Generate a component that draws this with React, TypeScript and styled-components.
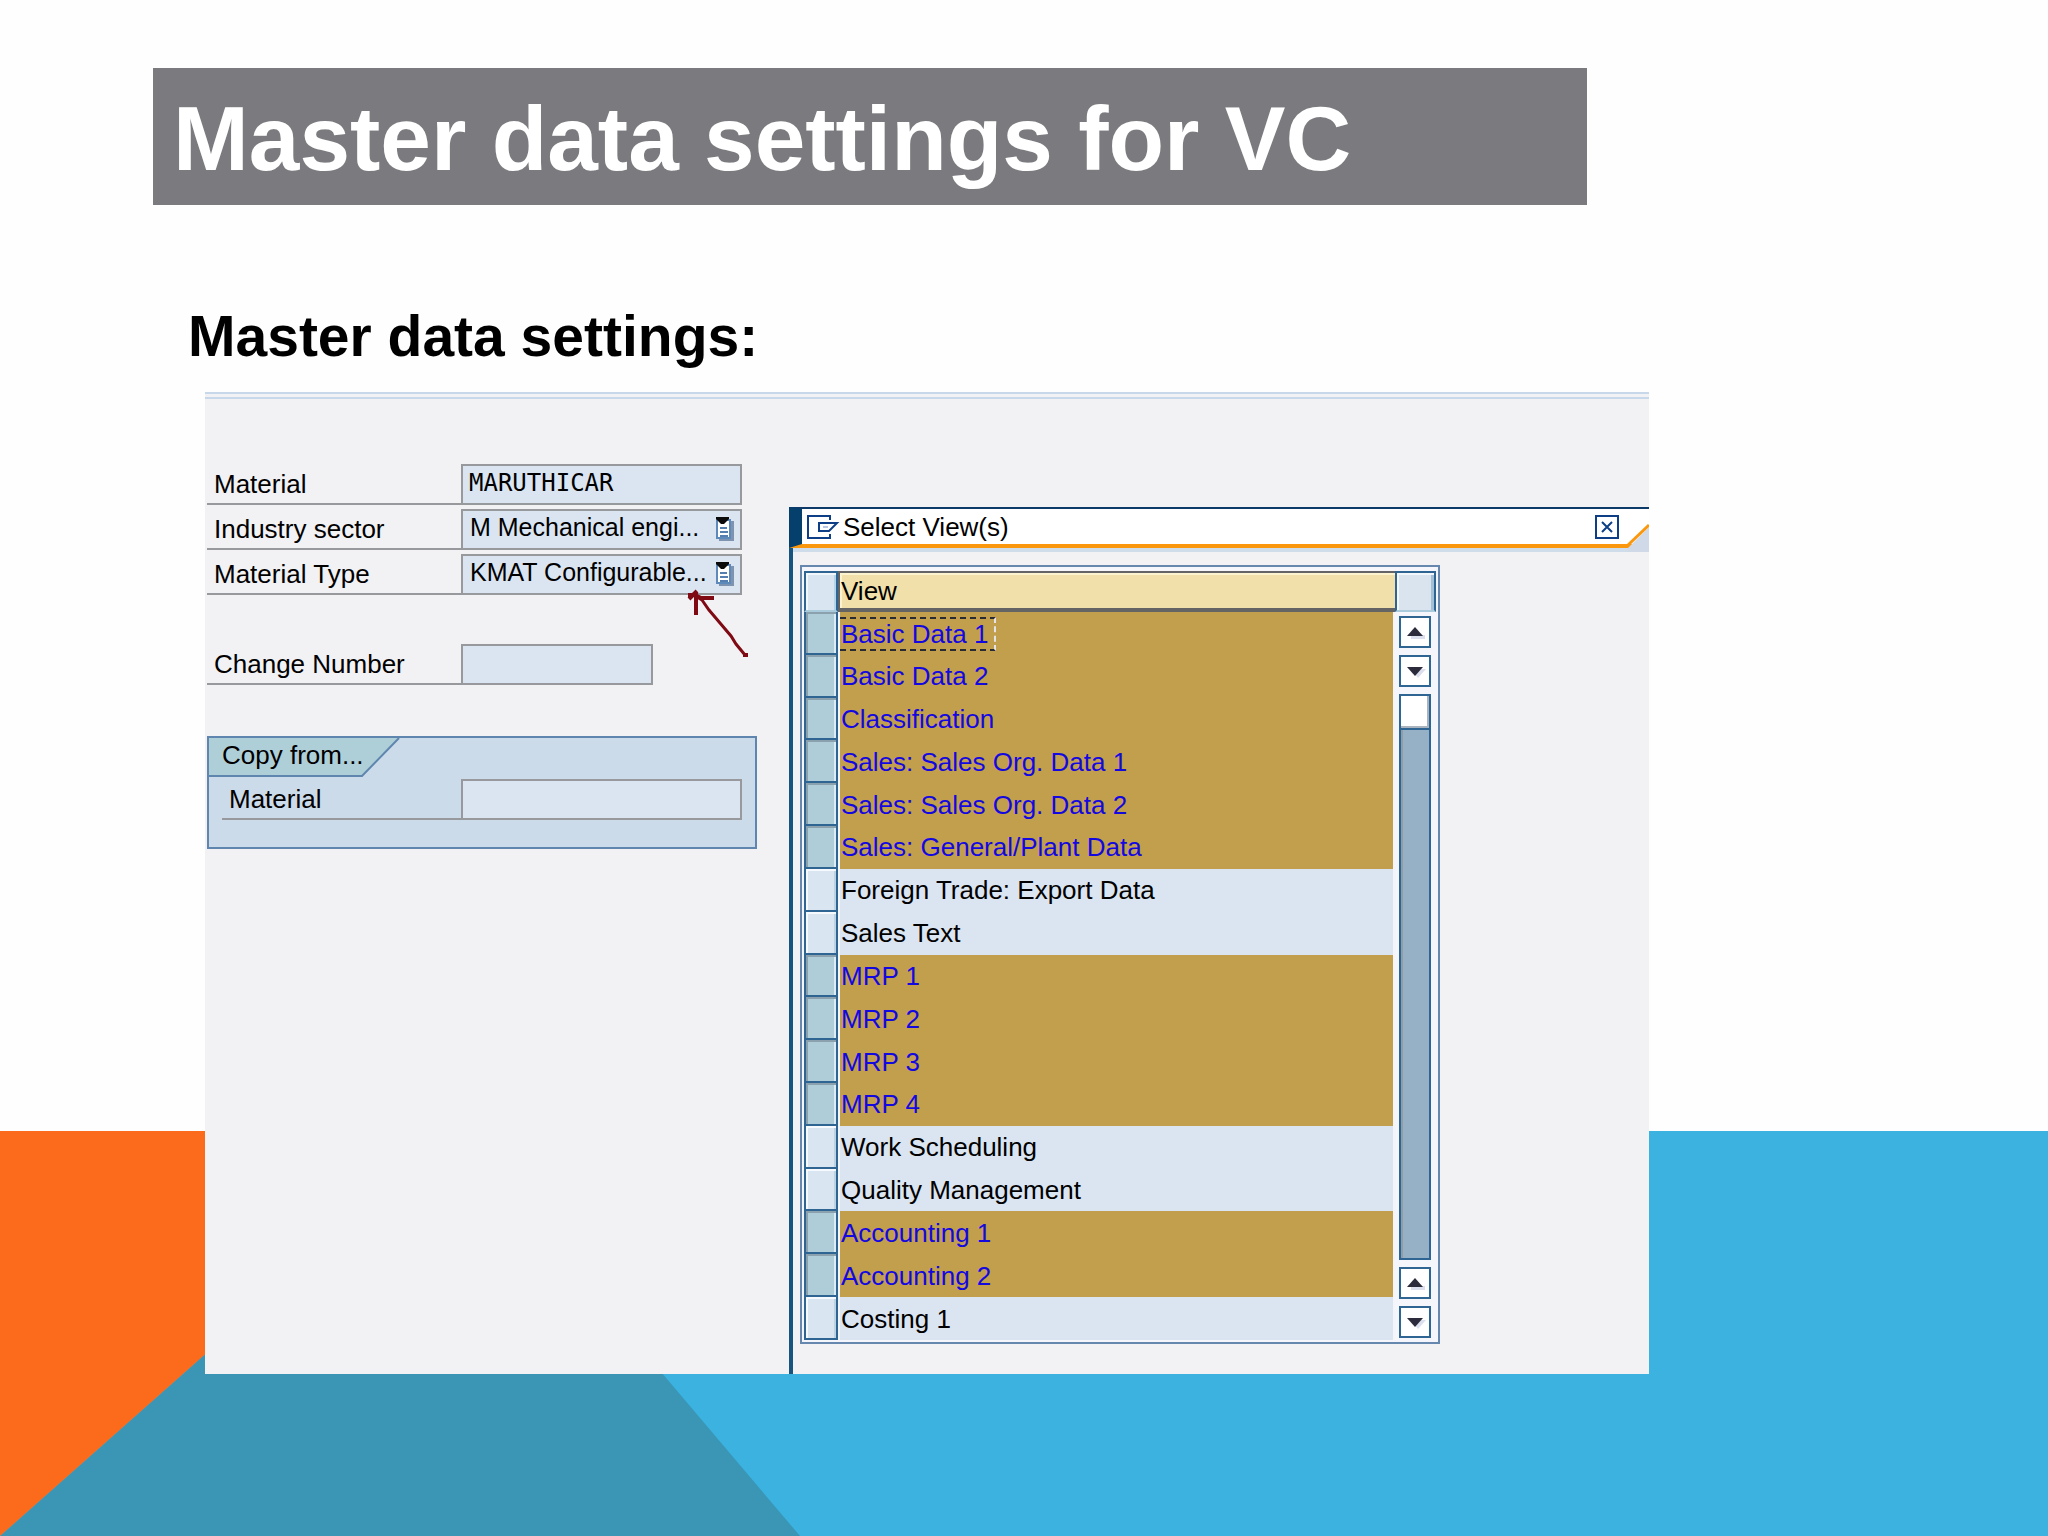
import React, { useState } from 'react';
import styled, { createGlobalStyle } from 'styled-components';

const ui = {
  paper: '#f2f1f3',
  field: '#dbe5f1',
  fieldBorder: '#97999c',
  steel: '#2f6592',
  frame: '#6688ae',
  orange: '#fb970d',
  gold: '#c29f4c',
  rowText: '#1408e0',
};

const GlobalStyle = createGlobalStyle`
  * { box-sizing: border-box; }
  body {
    margin: 0;
    background: #fefefe;
    color: #000;
    font-family: "Liberation Sans", Arial, sans-serif;
  }
  button, input, select { font: inherit; color: inherit; margin: 0; border-radius: 0; }
`;

const Slide = styled.main`
  position: relative;
  min-height: 100vh;
  padding: 68px 399px 0 153px;
`;

const Backdrop = styled.svg`
  position: absolute;
  left: 0;
  bottom: 0;
  width: 100%;
  height: 405px;
`;

const Content = styled.div`
  position: relative;
`;

const Title = styled.h1`
  margin: 0 62px 0 0;
  padding: 19px 20px 14px;
  background: #7b7a7e;
  color: #fff;
  font-size: 91px;
  line-height: 104px;
`;

const Subtitle = styled.h2`
  margin: 98px 0 23px 35px;
  font-size: 57px;
  line-height: 66px;
`;

const Screen = styled.section`
  display: flex;
  align-items: stretch;
  margin-left: 52px;
  background: ${ui.paper};
  border-top: 2px solid #c6d8ea;
  font-size: 26px;
`;

const ScreenInner = styled.div`
  display: flex;
  flex: 1;
  margin-top: 3px;
  border-top: 2px solid #c6d8ea;
`;

const FormPane = styled.form`
  flex: none;
  width: 584px;
  padding: 65px 0 0 2px;
  display: flex;
  flex-direction: column;
  gap: 4px;
`;

const Row = styled.div<{ $spaced?: boolean; $indent?: boolean }>`
  position: relative;
  display: flex;
  height: 41px;
  margin-top: ${(p) => (p.$spaced ? '45px' : '0')};
  margin-left: ${(p) => (p.$indent ? '13px' : '0')};
`;

const Label = styled.label<{ $indent?: boolean }>`
  width: ${(p) => (p.$indent ? '239px' : '254px')};
  padding-left: 7px;
  border-bottom: 2px solid ${ui.fieldBorder};
  line-height: 41px;
`;

const TextField = styled.input<{ $short?: boolean }>`
  width: ${(p) => (p.$short ? '192px' : '281px')};
  height: 41px;
  padding: 0 6px 4px;
  border: 2px solid ${ui.fieldBorder};
  background: ${ui.field};
  font-family: "DejaVu Sans Mono", monospace;
  font-size: 24px;
  outline: none;
`;

const SelectWrap = styled.div`
  position: relative;
  width: 281px;
`;

const Select = styled.select`
  appearance: none;
  width: 100%;
  height: 41px;
  padding: 0 0 5px 7px;
  border: 2px solid ${ui.fieldBorder};
  background: ${ui.field};
  font-size: 25px;
  outline: none;
`;

const ListIcon = styled.svg`
  position: absolute;
  right: 7px;
  top: 8px;
  pointer-events: none;
`;

const Arrow = styled.svg`
  position: absolute;
  left: 222px;
  top: 30px;
  pointer-events: none;
`;

const Group = styled.fieldset`
  min-width: 0;
  width: 550px;
  height: 113px;
  margin: 47px 0 0;
  padding: 0;
  border: 2px solid #5f86ae;
  background: #ccdbea;
`;

const GroupTab = styled.div`
  position: relative;
  height: 41px;
  padding-left: 13px;
  line-height: 35px;
  span { position: relative; }
  svg { position: absolute; left: 0; top: 0; }
`;

const Dialog = styled.section`
  flex: 1;
  min-width: 0;
  margin-top: 108px;
`;

const DialogBar = styled.header`
  position: relative;
  display: flex;
  align-items: center;
  gap: 3px;
  height: 41px;
  padding: 1px 30px 0 4px;
  border-top: 2px solid #0d3a68;
  border-left: 13px solid #05406c;
  border-bottom: 4px solid ${ui.orange};
  background: #fff;
`;

const DialogTitle = styled.h3`
  flex: 1;
  margin: 0;
  font-size: 26px;
  font-weight: 400;
  line-height: 34px;
`;

const CloseButton = styled.button`
  width: 24px;
  height: 24px;
  padding: 0;
  border: 2px solid #0e3f86;
  background: #fff;
  display: grid;
  place-items: center;
`;

const Corner = styled.svg`
  position: absolute;
  right: 0;
  top: 14px;
`;

const DialogBody = styled.div`
  padding: 17px 0 30px 7px;
  border-left: 4px solid #17557f;
  box-shadow: inset 0 4px 0 #cfdce9;
`;

const Frame = styled.div`
  display: flex;
  max-width: 640px;
  padding: 4px 2px 2px;
  border: 2px solid ${ui.frame};
  background: #f4f6fc;
`;

const Table = styled.table`
  flex: 1;
  height: 769px;
  border-collapse: separate;
  border-spacing: 0;
  table-layout: fixed;
`;

const HeadSelector = styled.th`
  width: 34px;
  height: 41px;
  padding: 0;
  background: #d9e6f2;
  border: 2px solid ${ui.steel};
  border-bottom-color: #a9cbdc;
  box-shadow: inset 2px 2px 0 #f2f7fc, inset -2px 0 0 #b4d4ea;
`;

const HeadView = styled.th`
  height: 41px;
  padding: 0 1px;
  text-align: left;
  font-weight: 400;
  line-height: 34px;
  background: #f1e0aa;
  border: solid #646464;
  border-width: 2px 0 4px 2px;
  box-shadow: inset 2px 2px 0 #fbf3cf;
`;

const Selector = styled.td<{ $on: boolean }>`
  padding: 0;
  border: solid ${ui.steel};
  border-width: 0 2px 2px;
  background: ${(p) => (p.$on ? '#aecdd9' : '#dae5f2')};
  box-shadow: ${(p) =>
    p.$on
      ? 'inset 2px 2px 0 #8ba2ae, inset -2px 0 0 #dcebf4'
      : 'inset 2px 2px 0 #f6f9fd, inset -2px 0 0 #bcd3e3'};
`;

const SelectorButton = styled.button`
  display: block;
  width: 100%;
  height: 38px;
  padding: 0;
  border: 0;
  background: transparent;
`;

const ViewCell = styled.td<{ $on: boolean }>`
  padding: 0 0 0 1px;
  border: solid #f2f5fa;
  border-width: 0 2px;
  background: ${(p) => (p.$on ? ui.gold : '#dae5f1')};
  color: ${(p) => (p.$on ? ui.rowText : '#000')};
  background-clip: padding-box;
  line-height: 34px;
  white-space: nowrap;
`;

const Focused = styled.span`
  display: inline-block;
  height: 34px;
  margin-left: -1px;
  padding: 0 6px 0 1px;
  line-height: 30px;
  vertical-align: middle;
  border: 2px dashed #2a2a33;
  border-left: 0;
  border-right-color: #e4e4e8;
`;

const Side = styled.div`
  flex: none;
  width: 41px;
  display: flex;
  flex-direction: column;
`;

const SideHead = styled.div`
  height: 41px;
  background: #d9e4ef;
  border: 2px solid ${ui.steel};
  border-bottom-color: #a9cbdc;
  box-shadow: inset 2px 2px 0 #f2f7fc, inset -3px 0 0 #a3c0d6;
`;

const ScrollBar = styled.div`
  flex: 1;
  display: flex;
  flex-direction: column;
  gap: 7px;
  padding: 4px 5px 2px 4px;
`;

const ScrollButton = styled.button`
  height: 32px;
  padding: 0;
  border: 2px solid ${ui.steel};
  background: #fff;
  display: grid;
  place-items: center;
`;

const Track = styled.div`
  flex: 1;
  border: 2px solid ${ui.steel};
  background: #96b0c5;
  box-shadow: inset 2px 0 0 #8f9da6;
`;

const Thumb = styled.div`
  height: 34px;
  background: #fff;
  border-bottom: 2px solid ${ui.steel};
  box-shadow: inset -2px -2px 0 #a9b4be;
`;

const views: [string, boolean][] = [
  ['Basic Data 1', true],
  ['Basic Data 2', true],
  ['Classification', true],
  ['Sales: Sales Org. Data 1', true],
  ['Sales: Sales Org. Data 2', true],
  ['Sales: General/Plant Data', true],
  ['Foreign Trade: Export Data', false],
  ['Sales Text', false],
  ['MRP 1', true],
  ['MRP 2', true],
  ['MRP 3', true],
  ['MRP 4', true],
  ['Work Scheduling', false],
  ['Quality Management', false],
  ['Accounting 1', true],
  ['Accounting 2', true],
  ['Costing 1', false],
];

const DropIcon = () => (
  <ListIcon width="20" height="24" viewBox="0 0 20 24" aria-hidden="true">
    <path d="M4 4h15v20H4z" fill="#7d93b0" />
    <path d="M2 3h13v18H2z" fill="#fff" stroke="#5d8abb" strokeWidth="2" />
    <path d="M5 11h7M5 15h8M5 19h8" stroke="#557fae" strokeWidth="2" />
    <path d="M1 0h13v2l-5 5H6L1 2z" fill="#0a0a0a" />
  </ListIcon>
);

const Triangle = ({ down }: { down?: boolean }) => (
  <svg width="22" height="16" viewBox="0 0 22 16" aria-hidden="true">
    <path d={down ? 'M7 6h15l-8 9z' : 'M7 11h14v4H7z'} fill="#dcdfee" />
    <path d={down ? 'M3 4h16l-8 9z' : 'M3 12h16l-8-9z'} fill="#2b2b3c" />
  </svg>
);

export default function App() {
  const [rows, setRows] = useState(views);
  const toggle = (i: number) =>
    setRows(rows.map(([n, on], k) => [n, k === i ? !on : on] as [string, boolean]));

  return (
    <>
      <GlobalStyle />
      <Slide>
        <Backdrop viewBox="0 0 2048 405" preserveAspectRatio="none" aria-hidden="true">
          <path d="M0 0h2048v405H0z" fill="#3bb2e0" />
          <path d="M0 405L457 0l343 405z" fill="#3b96b6" />
          <path d="M0 0h457L0 405z" fill="#fc6a1c" />
        </Backdrop>
        <Content>
          <Title>Master data settings for VC</Title>
          <Subtitle>Master data settings:</Subtitle>
          <Screen>
            <ScreenInner>
              <FormPane onSubmit={(e) => e.preventDefault()}>
                <Row>
                  <Label htmlFor="material">Material</Label>
                  <TextField id="material" defaultValue="MARUTHICAR" />
                </Row>
                <Row>
                  <Label htmlFor="sector">Industry sector</Label>
                  <SelectWrap>
                    <Select id="sector">
                      <option>M Mechanical engi...</option>
                    </Select>
                    <DropIcon />
                  </SelectWrap>
                </Row>
                <Row>
                  <Label htmlFor="type">Material Type</Label>
                  <SelectWrap>
                    <Select id="type">
                      <option>KMAT Configurable...</option>
                    </Select>
                    <DropIcon />
                    <Arrow width="68" height="76" viewBox="0 0 68 76" aria-hidden="true">
                      <g fill="none" stroke="#7f0a14" strokeWidth="3">
                        <path d="M9 10L19 16l7 10 11 13 11 13 5 8 9 11" />
                        <path d="M5 11h7l6 3h13M13 8v23M6 15l8-8" strokeWidth="4" />
                        <path d="M60 71h5" strokeWidth="4" />
                      </g>
                    </Arrow>
                  </SelectWrap>
                </Row>
                <Row $spaced>
                  <Label htmlFor="change">Change Number</Label>
                  <TextField id="change" $short />
                </Row>
                <Group aria-label="Copy from...">
                  <GroupTab>
                    <svg width="194" height="41" viewBox="0 0 194 41" aria-hidden="true">
                      <path d="M0 0h190l-37 38H0z" fill="#aecfd8" />
                      <path d="M190 0l-37 38H0" fill="none" stroke="#5f86ae" strokeWidth="2" />
                    </svg>
                    <span>Copy from...</span>
                  </GroupTab>
                  <Row $indent>
                    <Label $indent htmlFor="copy">Material</Label>
                    <TextField id="copy" />
                  </Row>
                </Group>
              </FormPane>

              <Dialog>
                <DialogBar>
                  <svg width="34" height="26" viewBox="0 0 34 26" fill="none" stroke="#0e3f86" strokeWidth="2" aria-hidden="true">
                    <path d="M24 6V2H2v22h22v-4" />
                    <path d="M13 9h18l-8 8H13z" />
                    <path d="M17 13h5" stroke="#b9c6e4" />
                  </svg>
                  <DialogTitle>Select View(s)</DialogTitle>
                  <CloseButton aria-label="Close">
                    <svg width="12" height="12" viewBox="0 0 12 12" stroke="#0e3f86" strokeWidth="2" aria-hidden="true">
                      <path d="M1 1l10 10M11 1L1 11" />
                    </svg>
                  </CloseButton>
                  <Corner width="22" height="29" viewBox="0 0 22 29" aria-hidden="true">
                    <path d="M1 25L22 4v25H1z" fill="#cfd9e8" />
                    <path d="M0 23L22 2" stroke={ui.orange} strokeWidth="3" />
                  </Corner>
                </DialogBar>
                <DialogBody>
                  <Frame>
                    <Table>
                      <thead>
                        <tr>
                          <HeadSelector aria-label="Select" />
                          <HeadView>View</HeadView>
                        </tr>
                      </thead>
                      <tbody>
                        {rows.map(([name, on], i) => (
                          <tr key={name}>
                            <Selector $on={on}>
                              <SelectorButton aria-label={name} aria-pressed={on} onClick={() => toggle(i)} />
                            </Selector>
                            <ViewCell $on={on}>{i === 0 ? <Focused>{name}</Focused> : name}</ViewCell>
                          </tr>
                        ))}
                      </tbody>
                    </Table>
                    <Side>
                      <SideHead />
                      <ScrollBar>
                        <ScrollButton aria-label="First page"><Triangle /></ScrollButton>
                        <ScrollButton aria-label="Line down"><Triangle down /></ScrollButton>
                        <Track><Thumb /></Track>
                        <ScrollButton aria-label="Line up"><Triangle /></ScrollButton>
                        <ScrollButton aria-label="Last page"><Triangle down /></ScrollButton>
                      </ScrollBar>
                    </Side>
                  </Frame>
                </DialogBody>
              </Dialog>
            </ScreenInner>
          </Screen>
        </Content>
      </Slide>
    </>
  );
}
